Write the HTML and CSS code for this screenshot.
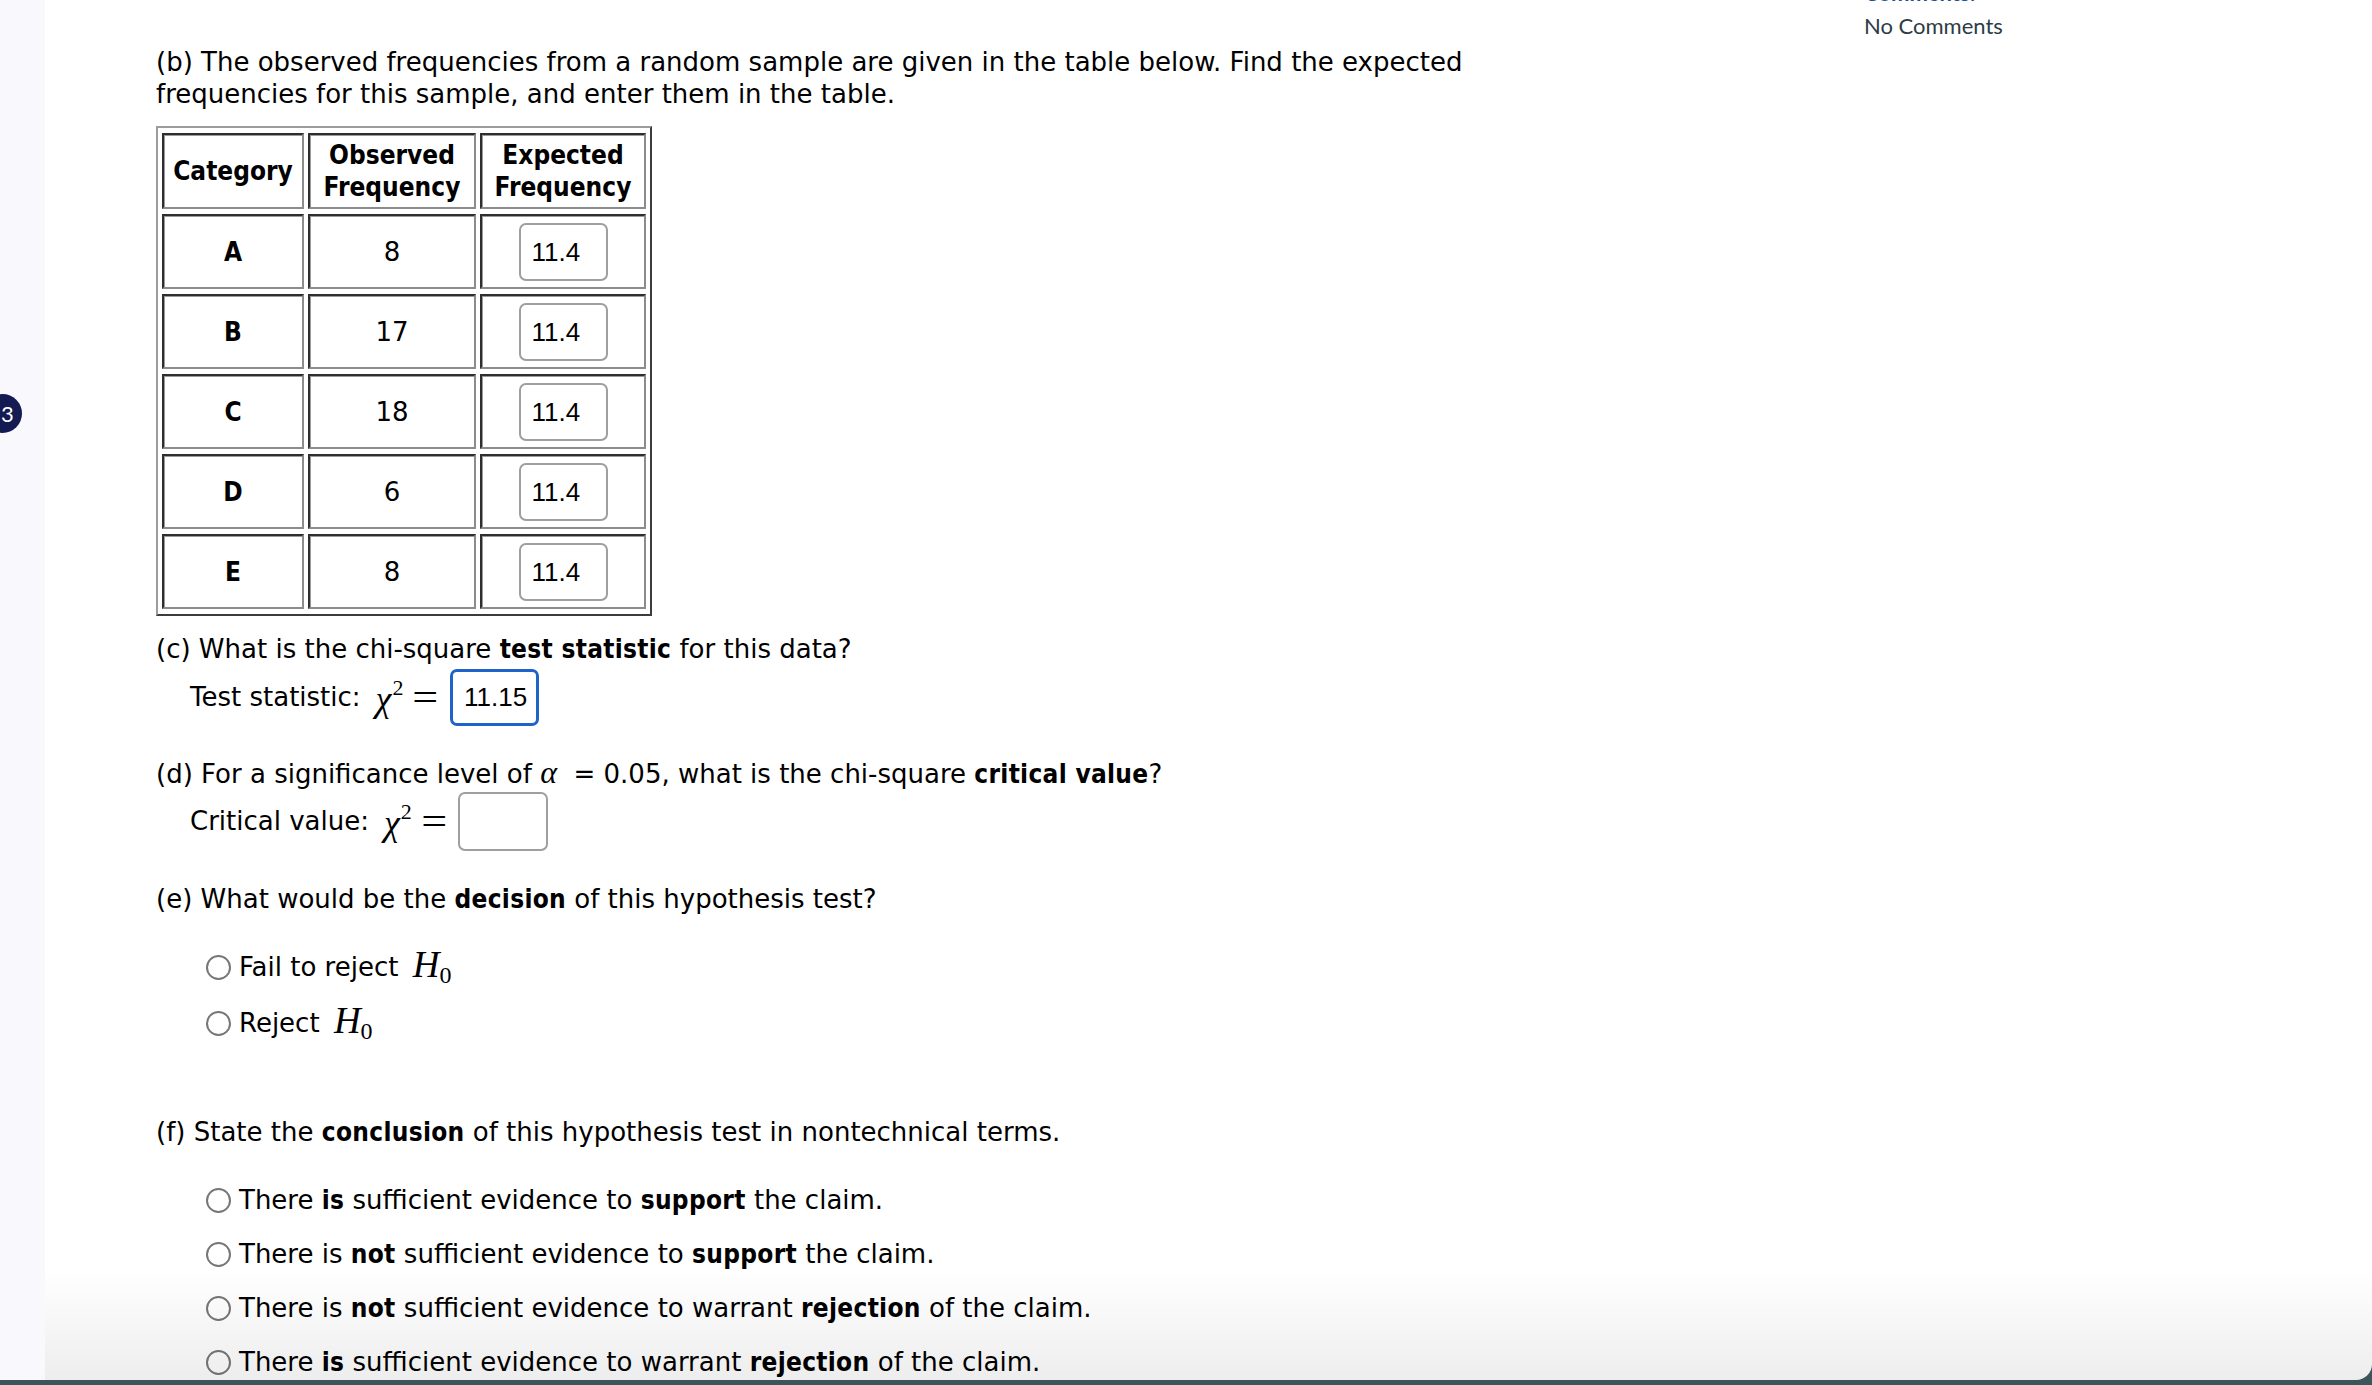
FILE: index.html
```html
<!DOCTYPE html>
<html>
<head>
<meta charset="utf-8">
<link rel="stylesheet" href="styles.css">
</head>
<body>
<div class="page">
  <div class="sidebar">
    <div class="badge">3</div>
  </div>
  <div class="main">
    <p class="q qb">(b) The observed frequencies from a random sample are given in the table below. Find the expected<br>frequencies for this sample, and enter them in the table.</p>
    <table class="freq">
      <tr class="head">
        <th class="c1">Category</th>
        <th class="c2">Observed<br>Frequency</th>
        <th class="c3">Expected<br>Frequency</th>
      </tr>
      <tr><th>A</th><td>8</td><td><span class="box">11.4</span></td></tr>
      <tr><th>B</th><td>17</td><td><span class="box">11.4</span></td></tr>
      <tr><th>C</th><td>18</td><td><span class="box">11.4</span></td></tr>
      <tr><th>D</th><td>6</td><td><span class="box">11.4</span></td></tr>
      <tr><th>E</th><td>8</td><td><span class="box">11.4</span></td></tr>
    </table>

    <p class="q qc">(c) What is the chi-square <b>test statistic</b> for this data?</p>
    <div class="ansline al-c">
      <span class="lbl">Test statistic:</span>
      <span class="math"><i class="chi">χ</i><sup>2</sup><span class="eq">=</span></span>
      <span class="box focus">11.15</span>
    </div>

    <p class="q qd">(d) For a significance level of <i class="alpha">α</i> &nbsp;= 0.05, what is the chi-square <b>critical value</b>?</p>
    <div class="ansline al-d">
      <span class="lbl">Critical value:</span>
      <span class="math"><i class="chi">χ</i><sup>2</sup><span class="eq">=</span></span>
      <span class="box empty"></span>
    </div>

    <p class="q qe">(e) What would be the <b>decision</b> of this hypothesis test?</p>
    <ul class="opts opts-e">
      <li><span class="radio"></span>Fail to reject <span class="h"><i>H</i><sub>0</sub></span></li>
      <li><span class="radio"></span>Reject <span class="h"><i>H</i><sub>0</sub></span></li>
    </ul>

    <p class="q qf">(f) State the <b>conclusion</b> of this hypothesis test in nontechnical terms.</p>
    <ul class="opts opts-f">
      <li><span class="radio"></span>There <b>is</b> sufficient evidence to <b>support</b> the claim.</li>
      <li><span class="radio"></span>There is <b>not</b> sufficient evidence to <b>support</b> the claim.</li>
      <li><span class="radio"></span>There is <b>not</b> sufficient evidence to warrant <b>rejection</b> of the claim.</li>
      <li><span class="radio"></span>There <b>is</b> sufficient evidence to warrant <b>rejection</b> of the claim.</li>
    </ul>
  </div>
  <div class="aside">
    <div class="cm-title">Comments:</div>
    <div class="cm-none">No Comments</div>
  </div>
  <div class="fade"></div>
</div>
</body>
</html>
```

FILE: styles.css
```css
html, body {
  margin: 0;
  padding: 0;
}
body {
  width: 2372px;
  height: 1385px;
  overflow: hidden;
  position: relative;
  background: #3c5558;
  font-family: "DejaVu Sans", "Liberation Sans", sans-serif;
  font-size: 26px;
  color: #000;
}
.page {
  display: flex;
  height: 1380px;
  background: #ffffff;
  border-bottom-right-radius: 16px;
  position: relative;
  overflow: hidden;
}
.sidebar {
  width: 45px;
  flex: 0 0 45px;
  background: #f8f8fd;
  position: relative;
}
.badge {
  position: absolute;
  left: -17px;
  top: 394px;
  width: 39px;
  height: 39px;
  border-radius: 50%;
  background: #141a52;
  color: #fff;
  font-family: "Lato", sans-serif;
  font-size: 22px;
  line-height: 39px;
  text-align: center;
  padding-left: 10px;
  box-sizing: border-box;
}
.main {
  flex: 0 0 1700px;
  padding-left: 111px;
  box-sizing: border-box;
}
.q {
  margin: 0;
  line-height: 32px;
}
.qb { margin-top: 46px; }
b {
  font-weight: bold;
  font-family: "DejaVu Sans Condensed", "DejaVu Sans", sans-serif;
  letter-spacing: 0.3px;
}

.freq {
  margin-top: 16px;
  border-collapse: separate;
  border-spacing: 4px 5px;
  border-style: solid;
  border-width: 2px;
  border-color: #9c9c9c #3c3c3c #3c3c3c #9c9c9c;
}
.freq th, .freq td {
  border-style: solid;
  border-width: 2px;
  border-color: #2e2e2e #8c8c8c #8c8c8c #2e2e2e;
  box-shadow: inset 1px 1px 0 #9a9a9a;
  text-align: center;
  vertical-align: middle;
  padding: 0;
  line-height: 32px;
  height: 71px;
}
.freq th {
  font-weight: bold;
  font-family: "DejaVu Sans Condensed", "DejaVu Sans", sans-serif;
}
.freq td { font-weight: normal; }
.freq .head th { height: 72px; }
.freq .c1 { width: 138px; }
.freq .c2 { width: 164px; }
.freq .c3 { width: 162px; }

.box {
  display: inline-block;
  box-sizing: border-box;
  width: 89px;
  height: 58px;
  border: 2px solid #9f9f9f;
  border-radius: 7px;
  font-family: "Liberation Sans", Arial, sans-serif;
  font-size: 26px;
  line-height: 54px;
  text-align: left;
  padding-left: 11px;
  vertical-align: middle;
  background: #fff;
}
.box.focus {
  border: 3px solid #1f62c8;
  width: 89px;
  height: 57px;
  line-height: 51px;
  padding-left: 11px;
}
.box.empty {
  width: 90px;
  height: 59px;
}

.qc { margin-top: 17px; }
.ansline {
  display: flex;
  align-items: center;
  padding-left: 34px;
  height: 58px;
}
.al-c { margin-top: 3px; }
.al-d { margin-top: 2px; }
.lbl { margin-right: 15px; }
.math {
  font-family: "Liberation Serif", "DejaVu Serif", serif;
  font-size: 36px;
  display: inline-flex;
  align-items: baseline;
  margin-right: 13px;
}
.math .chi { font-style: italic; }
.math sup {
  font-size: 22px;
  position: relative;
  top: -16px;
  vertical-align: baseline;
  margin-left: 1px;
}
.math .eq {
  margin-left: 11px;
  font-size: 40px;
  transform: scaleX(1.15);
}
.alpha {
  font-family: "Liberation Serif", "DejaVu Serif", serif;
  font-size: 32px;
}

.qd { margin-top: 30px; }
.qe { margin-top: 33px; }
.qf { margin-top: 77px; }

.opts {
  list-style: none;
  margin: 0;
  padding: 0 0 0 50px;
}
.opts li {
  display: flex;
  align-items: center;
  line-height: 32px;
  height: 32px;
  white-space: pre;
}
.opts-e { margin-top: 36px; }
.opts-e li + li { margin-top: 24px; }
.opts-f { margin-top: 36px; }
.opts-f li + li { margin-top: 22px; }
.radio {
  display: inline-block;
  box-sizing: border-box;
  width: 25px;
  height: 25px;
  border: 2px solid #777;
  border-radius: 50%;
  margin-right: 8px;
  flex: 0 0 auto;
}
.h {
  font-family: "Liberation Serif", "DejaVu Serif", serif;
  font-size: 37px;
  margin-left: 6px;
}
.h sub {
  font-style: normal;
  font-size: 24px;
  position: relative;
  top: 6px;
  vertical-align: baseline;
}

.aside {
  flex: 1;
  padding-left: 119px;
  position: relative;
}
.cm-title {
  font-family: "Lato", sans-serif;
  font-size: 22px;
  font-weight: bold;
  color: #1b4f8f;
  margin-top: -19px;
  line-height: 24px;
}
.cm-none {
  font-family: "Lato", sans-serif;
  font-size: 22px;
  color: #2d3b45;
  line-height: 26px;
  margin-top: 8px;
}

.fade {
  position: absolute;
  left: 45px;
  right: 0;
  bottom: 0;
  height: 110px;
  background: linear-gradient(to bottom, rgba(0,0,0,0), rgba(0,0,0,0.07));
  pointer-events: none;
}
```
